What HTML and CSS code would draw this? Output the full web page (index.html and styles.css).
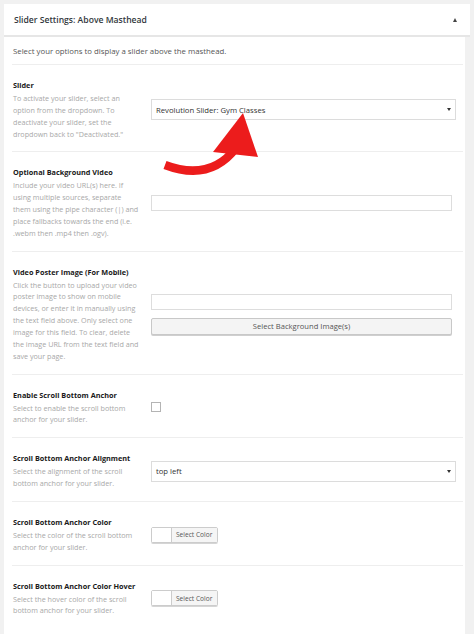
FILE: index.html
```html
<!DOCTYPE html>
<html>
<head>
<meta charset="utf-8">
<link rel="stylesheet" href="styles.css">
</head>
<body>
<div class="page">
  <div class="panel-header">
    <h2 class="panel-title">Slider Settings: Above Masthead</h2>
    <span class="toggle"></span>
  </div>
  <div class="panel-body">
    <p class="intro">Select your options to display a slider above the masthead.</p>

    <div class="row">
      <div class="info">
        <div class="label">Slider</div>
        <div class="desc">To activate your slider, select an option from the dropdown. To deactivate your slider, set the dropdown back to "Deactivated."</div>
      </div>
      <div class="control">
        <div class="select"><span>Revolution Slider: Gym Classes</span><span class="caret"></span></div>
      </div>
    </div>

    <div class="row">
      <div class="info">
        <div class="label">Optional Background Video</div>
        <div class="desc">Include your video URL(s) here. If using multiple sources, separate them using the pipe character (|) and place fallbacks towards the end (i.e. .webm then .mp4 then .ogv).</div>
      </div>
      <div class="control">
        <input class="text" type="text">
      </div>
    </div>

    <div class="row">
      <div class="info">
        <div class="label">Video Poster Image (For Mobile)</div>
        <div class="desc">Click the button to upload your video poster image to show on mobile devices, or enter it in manually using the text field above. Only select one image for this field. To clear, delete the image URL from the text field and save your page.</div>
      </div>
      <div class="control">
        <input class="text" type="text">
        <button class="btn">Select Background Image(s)</button>
      </div>
    </div>

    <div class="row">
      <div class="info">
        <div class="label">Enable Scroll Bottom Anchor</div>
        <div class="desc">Select to enable the scroll bottom anchor for your slider.</div>
      </div>
      <div class="control">
        <span class="checkbox"></span>
      </div>
    </div>

    <div class="row">
      <div class="info">
        <div class="label">Scroll Bottom Anchor Alignment</div>
        <div class="desc">Select the alignment of the scroll bottom anchor for your slider.</div>
      </div>
      <div class="control">
        <div class="select"><span>top left</span><span class="caret"></span></div>
      </div>
    </div>

    <div class="row">
      <div class="info">
        <div class="label">Scroll Bottom Anchor Color</div>
        <div class="desc">Select the color of the scroll bottom anchor for your slider.</div>
      </div>
      <div class="control">
        <div class="color"><span class="swatch"></span><span class="color-btn">Select Color</span></div>
      </div>
    </div>

    <div class="row last">
      <div class="info">
        <div class="label">Scroll Bottom Anchor Color Hover</div>
        <div class="desc">Select the hover color of the scroll bottom anchor for your slider.</div>
      </div>
      <div class="control">
        <div class="color"><span class="swatch"></span><span class="color-btn">Select Color</span></div>
      </div>
    </div>
  </div>

  <svg class="arrow" width="474" height="634" viewBox="0 0 474 634">
    <path d="M165 165 Q 210 182 236 148" fill="none" stroke="#ec1c1c" stroke-width="8.5"/>
    <polygon points="243,113 213,152 258,157" fill="#ec1c1c"/>
  </svg>
</div>
</body>
</html>
```

FILE: styles.css
```css
* { box-sizing: border-box; }

html, body {
  margin: 0;
  padding: 0;
  background: #f1f1f1;
  font-family: "Open Sans", "Noto Sans", sans-serif;
}

.page {
  position: relative;
  width: 474px;
  height: 634px;
  overflow: hidden;
  padding-top: 4px;
}

.panel-header {
  margin: 0 4px 0 4px;
  height: 33px;
  background: #fff;
  border-bottom: 2px solid #e6e6e6;
  display: flex;
  align-items: center;
  justify-content: space-between;
  padding: 1px 13px 0 10px;
}

.panel-title {
  margin: 0;
  font-size: 8.6px;
  font-weight: 600;
  color: #32373c;
}

.toggle {
  width: 0;
  height: 0;
  border-left: 2.5px solid transparent;
  border-right: 2.5px solid transparent;
  border-bottom: 4px solid #444;
}

.panel-body {
  margin: 0 9px 0 4px;
  background: #fff;
  padding: 0 2px 0 8px;
  min-height: 600px;
}

.intro {
  margin: 0;
  padding: 8px 0 7px 1px;
  font-size: 7.8px;
  line-height: 12px;
  color: #555;
  border-bottom: 1px solid #eeeeee;
}

.row {
  display: flex;
  align-items: center;
  padding: 14px 0 11px 1px;
  border-bottom: 1px solid #eeeeee;
}

.row.last { border-bottom: none; }

.info {
  width: 138px;
  flex: none;
  padding-right: 11.5px;
}

.label {
  font-size: 7.3px;
  font-weight: 700;
  line-height: 13px;
  color: #1a1a1a;
  margin-bottom: 1px;
}

.desc {
  font-size: 7.2px;
  line-height: 11.85px;
  color: #a8a8a8;
}

.control {
  flex: 1;
  display: flex;
  flex-direction: column;
  align-items: flex-start;
}

.select {
  width: 305px;
  height: 21px;
  border: 1px solid #dcdcdc;
  display: flex;
  align-items: center;
  justify-content: space-between;
  padding: 0 4px 0 4px;
  font-size: 7.7px;
  color: #333;
  background: #fff;
}

.caret {
  width: 0;
  height: 0;
  border-left: 2px solid transparent;
  border-right: 2px solid transparent;
  border-top: 3.5px solid #333;
}

.text {
  width: 301px;
  height: 16px;
  border: 1px solid #dddddd;
  margin: 0;
  padding: 0;
  background: #fff;
  outline: none;
}

.btn {
  margin-top: 8px;
  width: 301px;
  height: 17px;
  border: 1px solid #c8c8c8;
  border-radius: 2px;
  background: #f4f4f4;
  box-shadow: 0 1px 0 #cfcfcf;
  font-family: inherit;
  font-size: 7.6px;
  color: #555;
  padding: 0;
}

.checkbox {
  display: block;
  width: 10px;
  height: 10px;
  border: 1px solid #b4b4b4;
  background: #fff;
}

.color {
  display: flex;
  height: 16px;
  border: 1px solid #cccccc;
  border-radius: 2px;
  box-shadow: 0 1px 0 #d5d5d5;
}

.swatch {
  width: 20px;
  background: #fff;
  border-right: 1px solid #cccccc;
}

.color-btn {
  background: #f5f5f5;
  font-size: 6.6px;
  color: #555;
  padding: 0 5px 0 4px;
  display: flex;
  align-items: center;
}

.arrow {
  position: absolute;
  left: 0;
  top: 0;
  pointer-events: none;
}
```
